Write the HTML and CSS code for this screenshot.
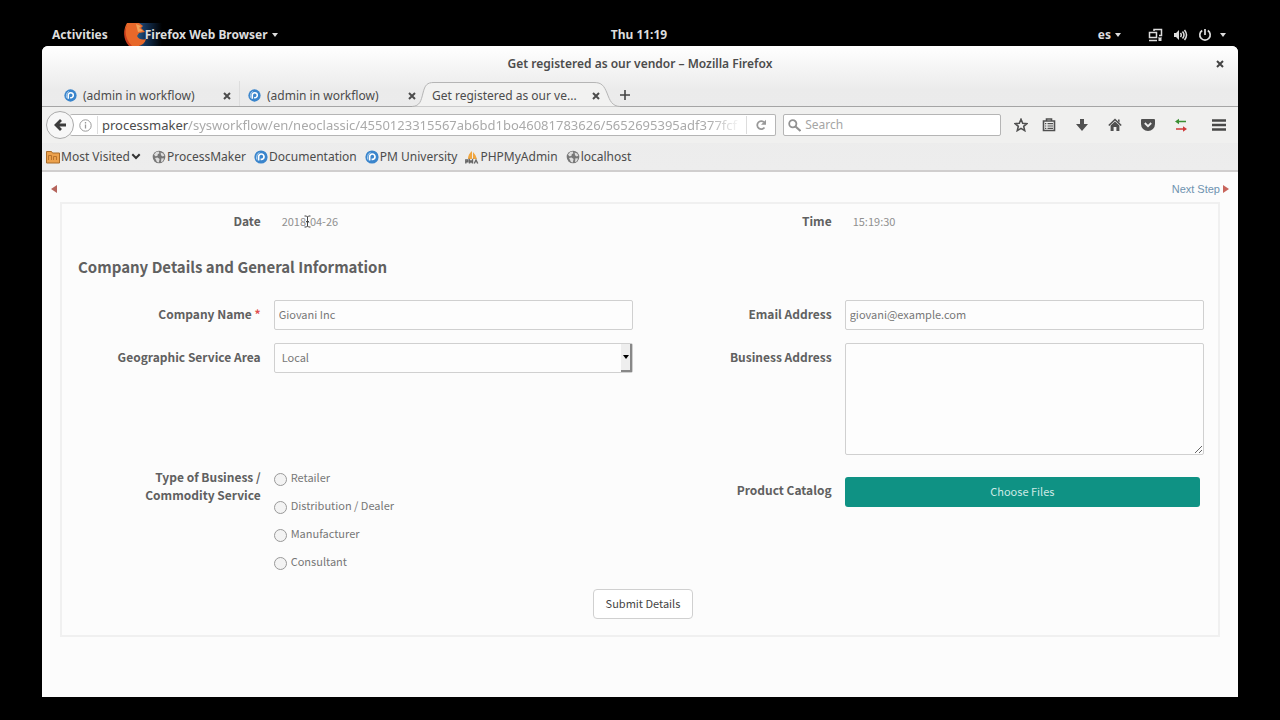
FILE: index.html
```html
<!DOCTYPE html>
<html lang="en">
<head>
<meta charset="utf-8">
<title>Get registered as our vendor</title>
<link rel="stylesheet" href="styles.css">
</head>
<body>
<svg class="defs" width="0" height="0" aria-hidden="true">
  <symbol id="pm" viewBox="0 0 14 14"><circle cx="7" cy="7" r="6.6" fill="#3a85cc"/><path d="M4.6 10.6V6.8A2.7 2.7 0 1 1 7.3 9.4H6.6" fill="none" stroke="#fff" stroke-width="1.7"/><path d="M2.6 9.5V6.8A4.6 4.6 0 0 1 5.4 2.6" fill="none" stroke="#b9d9f4" stroke-width=".9"/></symbol>
  <symbol id="globe" viewBox="0 0 14 14"><circle cx="7" cy="7" r="6.3" fill="#777"/><path d="M2 4.4 4.2 2l2.6-.6.6 1.8-1.6 1-.4 1.8-2.2.2zM8.6 2.4l2.6 1 1.2 2.4-1.8.8-1.6-1.4zM3 8l2.6-.4 2 1.4-.8 3.4-1.8-.4zM9.4 8.2l2.8.2-1.6 3-1.6.6z" fill="#ddd"/></symbol>
  <symbol id="close" viewBox="0 0 8 8"><path d="m1 1 6 6M7 1 1 7" stroke="currentColor" stroke-width="2"/></symbol>
</svg>

<header class="topbar">
  <div class="topbar-left">
    <button class="top-item activities">Activities</button>
    <button class="top-item app-menu">
      <svg class="fox" viewBox="0 0 38 23" aria-hidden="true">
        <defs><linearGradient id="sea" x1="0" x2="1"><stop offset="0" stop-color="#2b74a8"/><stop offset=".4" stop-color="#15375f"/><stop offset="1" stop-color="#000"/></linearGradient></defs>
        <path d="M8 0h30v23H16z" fill="url(#sea)"/>
        <path d="M3 0h12l4 3-2 2 4 4-6 1-2 3c2 4 6 4 9 3-1 4-4 6-7 7H7C1 18-2 8 3 0z" fill="#e8682a"/>
        <path d="M3 2C0 9 2 17 8 23H5C-1 17-1 8 3 2z" fill="#c83c1c"/>
        <path d="m12 1 5 2-2 2 4 3-5 1z" fill="#f2a45a"/>
      </svg>
      <span class="app-name">Firefox Web Browser</span><span class="caret"></span>
    </button>
  </div>
  <time class="clock">Thu 11:19</time>
  <div class="topbar-right">
    <button class="top-item">es<span class="caret"></span></button>
    <button class="top-item system" aria-label="System menu">
      <svg width="15" height="14" viewBox="0 0 15 14" fill="none" stroke="#ddd" stroke-width="1.5"><path d="M6 3V1.5h7.5v6H11M1.5 4.5h7v5h-7z"/><path d="M1 12.5h8M10.5 9.5l3 3M13.5 9.5l-3 3"/></svg>
      <svg width="15" height="14" viewBox="0 0 15 14" fill="none" stroke="#ddd" stroke-width="1.5"><path d="M1 5h2l3-3v10L3 9H1z" fill="#ddd" stroke="none"/><path d="M7.5 5q1.5 2 0 4M9.5 3.500q3 3.500 0 7M11.500 2q4 5 0 10"/></svg>
      <svg width="14" height="14" viewBox="0 0 14 14" fill="none" stroke="#ddd" stroke-width="1.7"><path d="M7 1v6M4.200 2.500a5.200 5.200 0 1 0 5.600 0"/></svg>
      <span class="caret"></span>
    </button>
  </div>
</header>

<div class="window">
  <div class="chrome">
    <div class="titlebar">
      <span class="window-title">Get registered as our vendor – Mozilla Firefox</span>
      <button class="window-close" aria-label="Close window"><svg class="x"><use href="#close"/></svg></button>
    </div>

    <div class="tabs">
      <div class="tab"><svg class="fav"><use href="#pm"/></svg><span class="tab-name">(admin in workflow)</span><button class="tab-close" aria-label="Close tab"><svg class="x"><use href="#close"/></svg></button></div>
      <div class="tab"><svg class="fav"><use href="#pm"/></svg><span class="tab-name">(admin in workflow)</span><button class="tab-close" aria-label="Close tab"><svg class="x"><use href="#close"/></svg></button></div>
      <div class="tab active">
        <svg class="tab-shape" viewBox="0 0 208 26" aria-hidden="true"><path d="M0 25.500C8 25 9 20 11 12 13 4 15 1.500 22 1.500H182C190 1.500 192 5 195 12 198 20 200 25 208 25.500" fill="#f2f2f1" stroke="#b5b5b5"/></svg>
        <span class="tab-name">Get registered as our ve...</span><button class="tab-close" aria-label="Close tab"><svg class="x"><use href="#close"/></svg></button>
      </div>
      <button class="new-tab" aria-label="New tab"><svg width="12" height="12" viewBox="0 0 12 12"><path d="M6 1v10M1 6h10" stroke="#444" stroke-width="1.6"/></svg></button>
    </div>

    <div class="navbar">
      <button class="back" aria-label="Back"><svg width="14" height="14" viewBox="0 0 14 14"><path d="M8 2 3 7l5 5M3 7h10" fill="none" stroke="#3c3c3c" stroke-width="2.8"/></svg></button>
      <div class="urlbar">
        <svg class="info" width="13" height="13" viewBox="0 0 13 13" fill="none" stroke="#999"><circle cx="6.500" cy="6.500" r="5.700"/><path d="M6.500 5.500v4M6.500 3v1.400" stroke-width="1.300"/></svg>
        <label class="host" for="url">processmaker</label>
        <input id="url" class="url" value="/sysworkflow/en/neoclassic/4550123315567ab6bd1bo46081783626/5652695395adf377fcf">
        <button class="reload" aria-label="Reload"><svg width="12" height="12" viewBox="0 0 12 12"><path d="M9.500 8.500A4 4 0 1 1 9 3.200" fill="none" stroke="#999" stroke-width="1.800"/><path d="M11 .8v5H6z" fill="#999"/></svg></button>
      </div>
      <div class="searchbar">
        <svg width="13" height="13" viewBox="0 0 13 13" fill="none" stroke="#929292"><circle cx="4.800" cy="4.800" r="3.600" stroke-width="1.800"/><path d="m7.500 7.500 5 4.500" stroke-width="2.200"/></svg>
        <input class="search" placeholder="Search" aria-label="Search">
      </div>
      <div class="tools">
        <button aria-label="Bookmark"><svg viewBox="0 0 14 14"><path d="m7 1.300 1.700 3.900 4.200.4-3.200 2.800 1 4.200L7 10.400l-3.700 2.200 1-4.200L1.100 5.600l4.200-.4z" fill="none" stroke="#505050" stroke-width="1.600"/></svg></button>
        <button aria-label="Bookmarks list"><svg viewBox="0 0 14 14"><path d="M1.500 3h11v9.500h-11zM4.500 3V1h5v2" fill="none" stroke="#505050" stroke-width="1.600"/><path d="M3 5.700h1.300M5.500 5.700h5.500M3 8h1.300M5.500 8h5.500M3 10.300h1.300M5.500 10.300h5.500" stroke="#505050" stroke-width="1.200"/></svg></button>
        <button aria-label="Downloads"><svg viewBox="0 0 14 14"><path d="M5 1h4v5h4l-6 7-6-7h4z" fill="#505050"/></svg></button>
        <button aria-label="Home"><svg viewBox="0 0 14 14"><path d="m.8 7.500 6.200-6 6.200 6" fill="none" stroke="#505050" stroke-width="1.600"/><path d="m2.600 7.600 4.400-4.200 4.400 4.200V13H8.400V9H5.600v4h-3zM10 1.500h1.600v3L10 3.200z" fill="#505050"/></svg></button>
        <button aria-label="Pocket"><svg viewBox="0 0 14 14"><path d="M0 2q0-1 1-1h12q1 0 1 1v4a7 7 0 0 1-14 0z" fill="#505050"/><path d="m3.800 5 3.200 3.200L10.200 5" fill="none" stroke="#eee" stroke-width="1.800"/></svg></button>
        <button aria-label="Sync"><svg viewBox="0 0 14 14"><path d="M1 3.500 5 .8v1.900h7v1.600H5v1.900z" fill="#3c8f34"/><path d="M13 11 9 8.300v1.900H2v1.600h7v1.900z" fill="#d03a3a"/></svg></button>
        <button class="menu" aria-label="Menu"><svg viewBox="0 0 14 14"><path d="M0 2.500h14M0 7h14M0 11.500h14" stroke="#484848" stroke-width="2.400"/></svg></button>
      </div>
    </div>

    <nav class="bookmarks">
      <a class="folder" href="#"><svg class="bm" viewBox="0 0 14 14"><path d="M.5 1.500h5l1 1.500h7v10H.5z" fill="#eca14c" stroke="#a86b28"/><path d="M2.500 10V5.500h3V10M7.500 10V6.500h3V10" fill="none" stroke="#b9732c"/></svg>Most Visited<svg width="10" height="7" viewBox="0 0 9 7"><path d="m.8 1.300 3.700 3.700 3.700-3.700" fill="none" stroke="#333" stroke-width="2"/></svg></a>
      <a href="#"><svg class="bm"><use href="#globe"/></svg>ProcessMaker</a>
      <a href="#"><svg class="bm"><use href="#pm"/></svg>Documentation</a>
      <a href="#"><svg class="bm"><use href="#pm"/></svg>PM University</a>
      <a href="#"><svg class="bm" viewBox="0 0 14 14"><path d="M3 9q0-5 4-8v8zM8 9V2q3 3 4 7z" fill="#f0a640"/><path d="M.8 13.500V10h2v1.800h-2M4.500 13.500V10l1.500 2 1.500-2v3.500M9.300 13.500l1.700-3.500 1.700 3.500" fill="none" stroke="#666" stroke-width="1.400"/></svg>PHPMyAdmin</a>
      <a href="#"><svg class="bm"><use href="#globe"/></svg>localhost</a>
    </nav>
  </div>

  <main class="page">
    <div class="steps">
      <a href="#" aria-label="Previous step"><svg width="6" height="8" viewBox="0 0 6 8"><path d="M6 0v8L0 4z" fill="#b5645c"/></svg></a>
      <a href="#">Next Step<svg width="6" height="8" viewBox="0 0 6 8"><path d="M0 0v8l6-4z" fill="#c8655c"/></svg></a>
    </div>

    <form class="panel">
      <div class="row stamp">
        <div class="field"><span class="label">Date</span><span class="value">2018-04-26<svg class="pointer" width="7" height="13" viewBox="0 0 7 13"><path d="M.5 1h2l1 1 1-1h2M3.500 2v9M.5 12h2l1-1 1 1h2M2 6.500h3" fill="none" stroke="#444"/></svg></span></div>
        <div class="field"><span class="label">Time</span><span class="value">15:19:30</span></div>
      </div>
      <h1 class="heading">Company Details and General Information</h1>
      <div class="row">
        <div class="field"><label class="label" for="company">Company Name <span class="req">*</span></label><input id="company" class="box" value="Giovani Inc"></div>
        <div class="field"><label class="label" for="email">Email Address</label><input id="email" class="box" value="giovani@example.com"></div>
      </div>
      <div class="row">
        <div class="field"><label class="label" for="area">Geographic Service Area</label><div class="select"><select id="area" class="box"><option>Local</option></select><span class="select-arrow"></span></div></div>
        <div class="field"><label class="label" for="address">Business Address</label><textarea id="address" class="box area"></textarea></div>
      </div>
      <div class="row types">
        <div class="field" role="radiogroup" aria-labelledby="type-label">
          <span class="label" id="type-label">Type of Business / Commodity Service</span>
          <div class="radios">
            <label><input type="radio" name="type">Retailer</label>
            <label><input type="radio" name="type">Distribution / Dealer</label>
            <label><input type="radio" name="type">Manufacturer</label>
            <label><input type="radio" name="type">Consultant</label>
          </div>
        </div>
        <div class="field catalog"><label class="label" for="files">Product Catalog</label><button type="button" id="files" class="choose">Choose Files</button></div>
      </div>
      <div class="actions"><button type="button" class="submit">Submit Details</button></div>
    </form>
  </main>
</div>
</body>
</html>
```
FILE: styles.css
```css
* { box-sizing: border-box; }
body {
  margin: 0;
  min-height: 100vh;
  padding: 24px 42px 23px;
  display: flex;
  flex-direction: column;
  background: #000;
  font: 12px/18px "Noto Sans", "Open Sans", sans-serif;
}
button, input, select, textarea { font: inherit; color: inherit; margin: 0; }
button { border: 0; padding: 0; background: none; }
a { text-decoration: none; color: inherit; }
svg { flex: none; display: block; }
.defs { position: absolute; }

/* Desktop bar */
.topbar {
  height: 22px;
  padding: 0 12px 0 10px;
  display: grid;
  grid-template-columns: 1fr auto 1fr;
  align-items: center;
  color: #ddd;
  font-weight: 700;
}
.topbar-left, .topbar-right { display: flex; align-items: center; }
.topbar-left { gap: 16px; }
.topbar-right { justify-content: flex-end; gap: 27px; }
.top-item { display: flex; align-items: center; gap: 4px; }
.system { gap: 10px; }
.system .caret { margin-left: -2px; }
.caret { border: 3px solid transparent; border-top: 4px solid #ddd; border-bottom: 0; }
.app-menu { position: relative; padding-left: 21px; }
.fox { position: absolute; left: 0; top: -3px; width: 38px; height: 23px; }
.app-name { position: relative; }

/* Browser window */
.window {
  flex: 1;
  display: flex;
  flex-direction: column;
  background: #fcfcfc;
  border-radius: 6px 6px 0 0;
  overflow: hidden;
}
.chrome {
  background: linear-gradient(#fff, #ebebeb 44px, #ededed);
  border-bottom: 2px solid #d0cece;
  color: #4c4c4c;
}
.titlebar { display: grid; place-items: center; height: 35px; position: relative; font-weight: 600; }
.window-close { position: absolute; right: 14px; top: 14px; color: #444; }
.x { width: 8px; height: 8px; }
.tabs { height: 26px; padding-left: 14px; display: flex; align-items: stretch; border-bottom: 1px solid #a5a5a5; }
.tab { width: 184px; padding: 4px 8px 0 8px; display: flex; align-items: center; gap: 6px; position: relative; }
.tab:first-child { border-right: 1px solid #ddd; }
.tab-name { flex: 1; white-space: nowrap; position: relative; }
.tab-close { position: relative; }
.fav { width: 13px; height: 13px; }
.tab-shape { position: absolute; left: -12px; top: 0; width: 208px; height: 26px; }
.new-tab { padding: 3px 0 0 11px; }
.navbar { display: flex; align-items: center; height: 36px; padding: 0 12px 0 4px; background: #f0f0ef; }
.back {
  width: 28px; height: 28px; flex: none;
  display: grid; place-items: center;
  background: #f7f7f7; border: 1px solid #aaa; border-radius: 50%;
  position: relative; z-index: 1;
}
.urlbar, .searchbar { display: flex; align-items: center; height: 22px; background: #fff; border: 1px solid #b5b5b5; border-radius: 2px; }
.urlbar { flex: 710 1 0; min-width: 0; margin-left: -4px; padding-left: 9px; border-left: 0; font-size: 13px; }
.host { margin-left: 5px; padding-left: 4px; border-left: 1px solid #ddd; }
.url {
  flex: 1; min-width: 0; padding: 0; border: 0; background: none; color: #aaa; outline: 0;
  mask-image: linear-gradient(90deg, #000 94%, transparent);
}
.reload { margin-left: 4px; padding: 3px 8px; border-left: 1px solid #ddd; }
.searchbar { flex: 216 1 0; min-width: 0; margin-left: 7px; padding-left: 4px; gap: 4px; }
.search { flex: 1; min-width: 0; border: 0; padding: 0; background: none; outline: 0; }
.search::placeholder { color: #a5a5a5; opacity: 1; }
.tools { display: flex; gap: 19px; margin-left: 13px; }
.tools button:nth-child(2) { margin-left: -5px; }
.tools svg { width: 14px; height: 14px; }
.tools .menu { margin-left: 5px; }
.bookmarks { display: flex; align-items: center; gap: 8px; height: 27px; padding-left: 4px; }
.bookmarks a { display: flex; align-items: center; gap: 1px; white-space: nowrap; }
.bookmarks .folder { margin-right: 3px; }
.bm { width: 14px; height: 14px; }

/* Form page */
.page { flex: 1; padding: 8px 18px 0; font-family: "Noto Sans CJK SC", "Noto Sans", sans-serif; font-size: 11px; color: #777; }
.steps { display: flex; justify-content: space-between; margin: 0 -9px; font: 11px/18px "Liberation Sans", Arial, sans-serif; color: #6f93b0; }
.steps a { display: flex; align-items: center; gap: 3px; }
.panel { margin-top: 4px; padding: 8px 2px 16px 12px; border: 2px solid #f0f0f0; }
.row { display: grid; grid-template-columns: 1fr 1fr; margin-bottom: 13px; }
.field { display: grid; grid-template-columns: 187fr 360fr; column-gap: 13px; align-items: start; padding-right: 12px; }
.label { padding-top: 5px; text-align: right; font-size: 12px; font-weight: 700; color: #606060; }
.req { color: #e05050; }
.stamp { margin-bottom: 25px; }
.stamp .label { padding-top: 0; }
.value { padding-left: 8px; color: #909090; position: relative; }
.pointer { position: absolute; left: 30px; top: 3px; }
.heading { margin: 0 0 22px 4px; font-size: 15px; line-height: 23px; font-weight: 700; color: #606060; }
.box {
  display: block; width: 100%; min-width: 0; height: 30px; padding: 0 4px 2px;
  border: 1px solid #d0d0d0; border-radius: 2px; background: #fdfdfd; color: #777; outline: 0;
}
.area { height: 112px; }
.select { position: relative; }
.select .box { appearance: none; padding-left: 7px; }
.select-arrow {
  position: absolute; right: 1px; top: 1px; bottom: 1px; width: 11px;
  display: grid; place-items: center; pointer-events: none;
  background: #eee; border: solid #888; border-width: 0 2px 2px 0;
}
.select-arrow::after { content: ""; border: 3px solid transparent; border-top: 4px solid #000; border-bottom: 0; }
.types { margin: 0; }
.types .label { padding: 0 0 0 60px; }
.radios { display: grid; gap: 10px; }
.radios label { display: flex; align-items: center; gap: 4px; }
.radios input {
  appearance: none; width: 13px; height: 13px; margin-top: 4px;
  border: 1px solid #999; border-radius: 50%; background: #f3f3f3;
}
.catalog .label { padding: 13px 0 0; }
.choose { margin: 9px 4px 0 0; height: 30px; padding-bottom: 2px; border-radius: 3px; background: #0f9284; color: #cdeae6; }
.actions { display: flex; justify-content: center; margin-top: 19px; padding-right: 4px; }
.submit { height: 30px; padding: 0 12px 2px; border: 1px solid #d0d0d0; border-radius: 4px; background: #fff; color: #444; }
```
